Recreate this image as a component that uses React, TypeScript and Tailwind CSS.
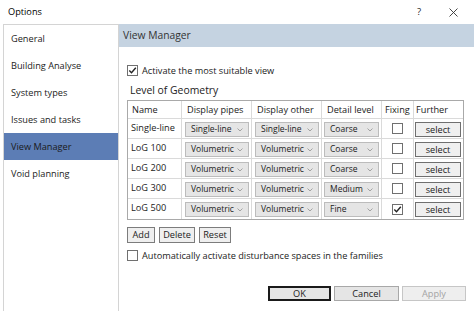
import React from "react";

const rows = [
  { name: "Single-line", pipes: "Single-line", other: "Single-line", detail: "Coarse", fix: false },
  { name: "LoG 100", pipes: "Volumetric", other: "Volumetric", detail: "Coarse", fix: false },
  { name: "LoG 200", pipes: "Volumetric", other: "Volumetric", detail: "Coarse", fix: false },
  { name: "LoG 300", pipes: "Volumetric", other: "Volumetric", detail: "Medium", fix: false },
  { name: "LoG 500", pipes: "Volumetric", other: "Volumetric", detail: "Fine", fix: true },
];

function Chevron() {
  return (
    <svg width="6" height="4" viewBox="0 0 6 4" className="shrink-0">
      <path d="M0.5 0.5 L3 3 L5.5 0.5" fill="none" stroke="#9a9a9a" strokeWidth="0.9" />
    </svg>
  );
}

function Check({ checked }: { checked: boolean }) {
  return (
    <div className="w-[11px] h-[11px] border border-[#707070] bg-white flex items-center justify-center shrink-0">
      {checked && (
        <svg width="9" height="9" viewBox="0 0 9 9">
          <path d="M1.3 4.6 L3.5 6.8 L7.8 1.8" fill="none" stroke="#222" strokeWidth="1.4" />
        </svg>
      )}
    </div>
  );
}

function Drop({ text }: { text: string }) {
  return (
    <div className="h-[15px] mt-[3px] mb-[2px] bg-[#e5e5e5] border border-[#bcbcbc] flex items-center pl-[5px] pr-[5px] justify-between">
      <span className="leading-none text-[8.5px]">{text}</span>
      <Chevron />
    </div>
  );
}

export default function App() {
  const font = { fontFamily: '"Open Sans", "Noto Sans", sans-serif' };
  return (
    <div className="w-[474px] h-[311px] bg-white flex flex-col text-[9.2px] text-[#1b1b1b] overflow-hidden" style={font}>
      {/* Title bar */}
      <div className="h-[24px] flex items-center pl-[8px] shrink-0">
        <span className="text-[9.2px] text-black">Options</span>
        <span className="ml-auto text-[9.5px] text-[#222] mr-[28px]">?</span>
        <svg width="9" height="9" viewBox="0 0 9 9" className="mr-[16px]">
          <path d="M0.5 0.5 L8.5 8.5 M8.5 0.5 L0.5 8.5" stroke="#333" strokeWidth="0.9" />
        </svg>
      </div>
      <div className="flex flex-1 min-h-0">
        {/* Sidebar */}
        <div className="w-[116px] ml-[3px] border-l border-t border-r border-[#d4d4d4] flex flex-col shrink-0">
          {["General", "Building Analyse", "System types", "Issues and tasks", "View Manager", "Void planning"].map((t) => (
            <div
              key={t}
              className={
                "h-[27px] flex items-center pl-[7px] pt-[1px] " + (t === "View Manager" ? "bg-[#5c7db5]" : "")
              }
            >
              {t}
            </div>
          ))}
        </div>
        {/* Right panel */}
        <div className="flex-1 flex flex-col min-w-0">
          <div className="h-[23px] bg-[#c5d3e1] flex items-center pl-[4px] text-[10.3px] text-[#333]">
            View Manager
          </div>
          <div className="flex flex-col pl-[8px] pr-[8px]">
            <div className="mt-[18px] flex items-center gap-[4px] h-[11px]">
              <Check checked={true} />
              <span>Activate the most suitable view</span>
            </div>
            <div className="mt-[8px] h-[14px] flex items-center pl-[3px] text-[10.4px] text-[#222]">
              Level of Geometry
            </div>
            <div className="mt-[2px] w-[337px] border border-[#a9a9a9]">
              <div className="flex h-[18px] items-center border-b border-[#dadada]">
                <div className="w-[54px] pl-[4px] border-r border-[#dadada] h-full flex items-center">Name</div>
                <div className="w-[70px] pl-[5px] border-r border-[#dadada] h-full flex items-center">Display pipes</div>
                <div className="w-[70px] pl-[5px] border-r border-[#dadada] h-full flex items-center">Display other</div>
                <div className="w-[60px] pl-[5px] border-r border-[#dadada] h-full flex items-center">Detail level</div>
                <div className="w-[32px] pl-[3px] border-r border-[#dadada] h-full flex items-center">Fixing</div>
                <div className="flex-1 pl-[2px] h-full flex items-center">Further</div>
              </div>
              {rows.map((r, i) => (
                <div
                  key={r.name}
                  className={"flex h-[20px] " + (i < rows.length - 1 ? "border-b border-[#dadada]" : "")}
                >
                  <div className="w-[54px] pl-[3px] pt-[2px] border-r border-[#dadada]">{r.name}</div>
                  <div className="w-[70px] pl-[3px] pr-[2px] border-r border-[#dadada]">
                    <Drop text={r.pipes} />
                  </div>
                  <div className="w-[70px] pl-[3px] pr-[2px] border-r border-[#dadada]">
                    <Drop text={r.other} />
                  </div>
                  <div className="w-[60px] pl-[2px] pr-[2px] border-r border-[#dadada]">
                    <Drop text={r.detail} />
                  </div>
                  <div className="w-[32px] border-r border-[#dadada] flex items-center justify-center">
                    <Check checked={r.fix} />
                  </div>
                  <div className="flex-1 pl-[1px] pr-[2px]">
                    <div className="h-[15px] mt-[3px] bg-[#efefef] border border-[#6f6f6f] flex items-center justify-center leading-none">
                      select
                    </div>
                  </div>
                </div>
              ))}
            </div>
            <div className="mt-[7px] flex gap-[4px] h-[16px]">
              <div className="w-[28px] bg-[#efefef] border border-[#7c7c7c] flex items-center justify-center">Add</div>
              <div className="w-[36px] bg-[#efefef] border border-[#7c7c7c] flex items-center justify-center">Delete</div>
              <div className="w-[32px] bg-[#efefef] border border-[#7c7c7c] flex items-center justify-center">Reset</div>
            </div>
            <div className="mt-[7px] flex items-center gap-[4px] h-[11px]">
              <Check checked={false} />
              <span>Automatically activate disturbance spaces in the families</span>
            </div>
            <div className="mt-[25px] flex justify-end gap-[3px] h-[15px]">
              <div className="w-[63px] bg-[#e5e5e5] border-2 border-[#1a1a1a] flex items-center justify-center">OK</div>
              <div className="w-[65px] bg-[#e5e5e5] border border-[#a8a8a8] flex items-center justify-center">Cancel</div>
              <div className="w-[64px] bg-[#eeeeee] border border-[#c6c6c6] flex items-center justify-center text-[#a3a3a3]">Apply</div>
            </div>
          </div>
        </div>
      </div>
    </div>
  );
}
